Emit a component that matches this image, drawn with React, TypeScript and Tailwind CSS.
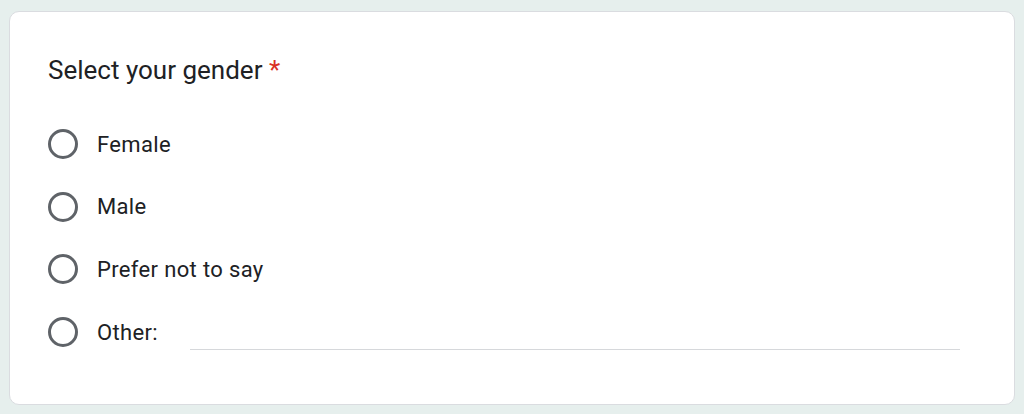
const options = ["Female", "Male", "Prefer not to say"];

function Radio() {
  return (
    <span className="block h-[30px] w-[30px] shrink-0 rounded-full border-[3px] border-[#5f6368]" />
  );
}

export default function App() {
  return (
    <div className="h-[414px] w-[1024px] bg-[#e6efed] px-[9px] pt-[11px] font-['Roboto',sans-serif]">
      <div className="h-[394px] rounded-[10px] border border-[#dadce0] bg-white pl-[38px] pr-[54px] pt-[43px]">
        <h2 className="text-[26px] leading-[30px] text-[#202124]">
          Select your gender <span className="text-[#d93025]">*</span>
        </h2>
        <ul className="mt-[44px] flex flex-col gap-[32.7px]">
          {options.map((o) => (
            <li key={o} className="flex h-[30px] items-center gap-[19px]">
              <Radio />
              <span className="text-[22px] tracking-[0.35px] text-[#202124]">{o}</span>
            </li>
          ))}
          <li className="flex h-[30px] items-center">
            <Radio />
            <span className="ml-[19px] w-[93px] text-[22px] tracking-[0.35px] text-[#202124]">Other:</span>
            <span className="mt-[34px] h-[1px] flex-1 bg-[#d6d8db]" />
          </li>
        </ul>
      </div>
    </div>
  );
}
